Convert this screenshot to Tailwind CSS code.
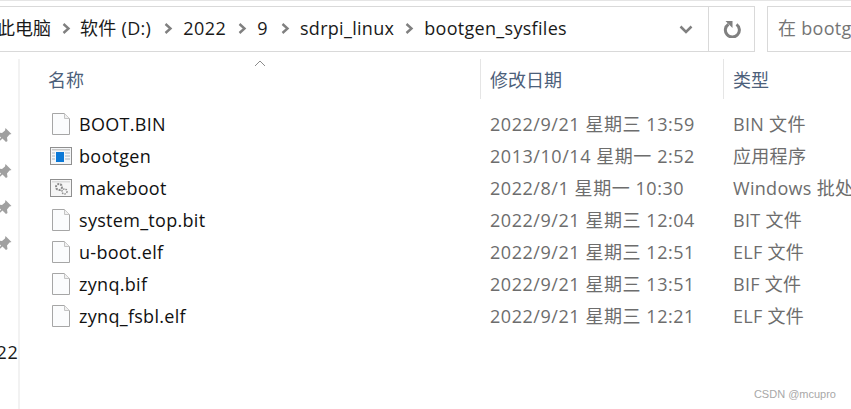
<!DOCTYPE html>
<html><head><meta charset="utf-8"><script src="https://cdn.jsdelivr.net/npm/@tailwindcss/browser@4"></script></head>
<body class="bg-white">
<div class="relative w-[851px] h-[409px] overflow-hidden bg-white text-[18px] font-['Open_Sans','Noto_Sans_CJK_SC',sans-serif]">
  <div class="h-[1px] bg-[#e5e5e5]"></div>
  <div class="flex h-[46px] mt-[5px] text-[#1a1a1a] tracking-[.3px]">
    <div class="flex w-[755px] items-center border border-l-0 border-[#d9d9d9] h-full">
      <div class="flex items-center flex-1 pb-[2px] overflow-hidden whitespace-nowrap">
        <span class="-ml-[3px] tracking-normal">此电脑</span>
        <svg class="w-[9px] h-[11px] ml-[11px] mr-[9px] shrink-0" viewBox="0 0 9 11"><path d="M1.500 1l5 4.500-5 4.500" fill="none" stroke="#808080" stroke-width="2.400"/></svg>
        <span>软件 (D:)</span>
        <svg class="w-[9px] h-[11px] ml-[13px] mr-[10px] shrink-0" viewBox="0 0 9 11"><path d="M1.500 1l5 4.500-5 4.500" fill="none" stroke="#808080" stroke-width="2.400"/></svg>
        <span class="tracking-[.5px]">2022</span>
        <svg class="w-[9px] h-[11px] ml-[12px] mr-[10px] shrink-0" viewBox="0 0 9 11"><path d="M1.500 1l5 4.500-5 4.500" fill="none" stroke="#808080" stroke-width="2.400"/></svg>
        <span>9</span>
        <svg class="w-[9px] h-[11px] ml-[13px] mr-[10px] shrink-0" viewBox="0 0 9 11"><path d="M1.500 1l5 4.500-5 4.500" fill="none" stroke="#808080" stroke-width="2.400"/></svg>
        <span>sdrpi_linux</span>
        <svg class="w-[9px] h-[11px] ml-[11px] mr-[10px] shrink-0" viewBox="0 0 9 11"><path d="M1.500 1l5 4.500-5 4.500" fill="none" stroke="#808080" stroke-width="2.400"/></svg>
        <span>bootgen_sysfiles</span>
      </div>
      <div class="w-[44px] flex justify-center">
        <svg class="w-[14px] h-[9px]" viewBox="0 0 14 9"><path d="M1.500 1.500l5.500 5.500 5.500-5.500" fill="none" stroke="#808080" stroke-width="2.500"/></svg>
      </div>
      <div class="w-[46px] h-full flex items-center justify-center border-l border-[#d9d9d9]">
        <svg class="w-[18px] h-[18px]" viewBox="0 0 18 18"><path d="M5.500 4.200A7 7 0 1 0 13.500 4.400" fill="none" stroke="#808080" stroke-width="3"/><path d="M2.500 1h7v7z" fill="#808080"/></svg>
      </div>
    </div>
    <div class="ml-[12px] flex-1 border border-r-0 border-[#d9d9d9] h-full flex items-center pl-[10px] pb-[2px] text-[#757575] whitespace-nowrap overflow-hidden">在 bootgen_sysfiles 中搜索</div>
  </div>
  <div class="flex h-[357px] pt-[7px]">
    <div class="w-[20px] shrink-0 border-r-2 border-[#f2f2f2] pt-[69px] overflow-hidden">
      <div class="flex flex-col gap-[20px] -ml-[4px]">
        <svg class="w-[16px] h-[16px]" viewBox="0 0 16 16"><path d="M9.500 0l6 6-2 .5-2.500 3 .5 3.500-1.500 1-3.500-3.500L1 15.500l-.5-.5L5 9.500 1.500 6l1-1.500 3.500.5 3-2.500z" fill="#a0a0a0"/></svg>
        <svg class="w-[16px] h-[16px]" viewBox="0 0 16 16"><path d="M9.500 0l6 6-2 .5-2.500 3 .5 3.500-1.500 1-3.500-3.500L1 15.500l-.5-.5L5 9.500 1.500 6l1-1.500 3.500.5 3-2.500z" fill="#a0a0a0"/></svg>
        <svg class="w-[16px] h-[16px]" viewBox="0 0 16 16"><path d="M9.500 0l6 6-2 .5-2.500 3 .5 3.500-1.500 1-3.500-3.500L1 15.500l-.5-.5L5 9.500 1.500 6l1-1.500 3.500.5 3-2.500z" fill="#a0a0a0"/></svg>
        <svg class="w-[16px] h-[16px]" viewBox="0 0 16 16"><path d="M9.500 0l6 6-2 .5-2.500 3 .5 3.500-1.500 1-3.500-3.500L1 15.500l-.5-.5L5 9.500 1.500 6l1-1.500 3.500.5 3-2.500z" fill="#a0a0a0"/></svg>
      </div>
      <div class="mt-[88px] -ml-[25px] text-[#1a1a1a] leading-[24px] tracking-[.5px] text-right w-[43px]">2022</div>
    </div>
    <div class="flex-1 min-w-0 overflow-hidden">
      <div class="relative flex h-[40px] text-[#4c607a] items-center">
        <div class="w-[460px] shrink-0 pl-[28px] pt-[2px]">名称</div>
        <div class="w-[243px] shrink-0 h-full border-l border-[#e5e5e5] pl-[9px] flex items-center pt-[2px]">修改日期</div>
        <div class="flex-1 h-full border-l border-[#e5e5e5] pl-[9px] flex items-center pt-[2px]">类型</div>
        <svg class="absolute left-[234px] top-[1px] w-[12px] h-[7px]" viewBox="0 0 12 7"><path d="M1 6l5-5 5 5" fill="none" stroke="#8c8c8c" stroke-width="1"/></svg>
      </div>
      <div class="mt-[9px] whitespace-nowrap">
        <div class="flex h-[32px] items-center"><div class="w-[470px] shrink-0 flex items-center pl-[32px] text-[#111] tracking-[.3px]"><svg class="w-[18px] h-[22px] mr-[9px]" viewBox="0 0 18 22"><path d="M.5.5h12l5 5v16H.5z" fill="#fbfcfd" stroke="#a6a6a6"/><path d="M12.500.5v5h5" fill="#f0f0f0" stroke="#c4c4c4"/></svg>BOOT.BIN</div><div class="w-[243px] shrink-0 text-[#6d6d6d] tracking-[.55px]">2022/9/21 星期三 13:59</div><div class="shrink-0 text-[#6d6d6d] tracking-[.3px]">BIN 文件</div></div>
        <div class="flex h-[32px] items-center"><div class="w-[470px] shrink-0 flex items-center pl-[30px] text-[#111] tracking-[.3px]"><svg class="w-[22px] h-[18px] mr-[7px]" viewBox="0 0 22 18"><rect x=".5" y=".5" width="21" height="17" fill="#f4f6f8" stroke="#8f8f8f"/><rect x="2" y="2" width="18" height="1.500" fill="#c8c8c8"/><rect x="6" y="5" width="8" height="10" fill="#0a78d7"/><path d="M2 6h3M2 9h3M2 12h3M15 6h5M15 9h5M15 12h5" stroke="#a8b4c0"/></svg>bootgen</div><div class="w-[243px] shrink-0 text-[#6d6d6d] tracking-[.55px]">2013/10/14 星期一 2:52</div><div class="shrink-0 text-[#6d6d6d] tracking-[.3px]">应用程序</div></div>
        <div class="flex h-[32px] items-center"><div class="w-[470px] shrink-0 flex items-center pl-[30px] text-[#111] tracking-[.3px]"><svg class="w-[22px] h-[18px] mr-[7px]" viewBox="0 0 22 18"><rect x=".5" y=".5" width="21" height="17" fill="#f6f6f6" stroke="#8f8f8f"/><rect x="2" y="2" width="18" height="1.500" fill="#dcdcdc"/><circle cx="9" cy="8" r="3" fill="none" stroke="#8c8c8c" stroke-width="2" stroke-dasharray="2 1"/><circle cx="14.500" cy="12.500" r="2.500" fill="none" stroke="#8c8c8c" stroke-width="1.500" stroke-dasharray="1.500 1"/></svg>makeboot</div><div class="w-[243px] shrink-0 text-[#6d6d6d] tracking-[.55px]">2022/8/1 星期一 10:30</div><div class="shrink-0 text-[#6d6d6d] tracking-[.3px]">Windows 批处理文件</div></div>
        <div class="flex h-[32px] items-center"><div class="w-[470px] shrink-0 flex items-center pl-[32px] text-[#111] tracking-[.3px]"><svg class="w-[18px] h-[22px] mr-[9px]" viewBox="0 0 18 22"><path d="M.5.5h12l5 5v16H.5z" fill="#fbfcfd" stroke="#a6a6a6"/><path d="M12.500.5v5h5" fill="#f0f0f0" stroke="#c4c4c4"/></svg>system_top.bit</div><div class="w-[243px] shrink-0 text-[#6d6d6d] tracking-[.55px]">2022/9/21 星期三 12:04</div><div class="shrink-0 text-[#6d6d6d] tracking-[.3px]">BIT 文件</div></div>
        <div class="flex h-[32px] items-center"><div class="w-[470px] shrink-0 flex items-center pl-[32px] text-[#111] tracking-[.3px]"><svg class="w-[18px] h-[22px] mr-[9px]" viewBox="0 0 18 22"><path d="M.5.5h12l5 5v16H.5z" fill="#fbfcfd" stroke="#a6a6a6"/><path d="M12.500.5v5h5" fill="#f0f0f0" stroke="#c4c4c4"/></svg>u-boot.elf</div><div class="w-[243px] shrink-0 text-[#6d6d6d] tracking-[.55px]">2022/9/21 星期三 12:51</div><div class="shrink-0 text-[#6d6d6d] tracking-[.3px]">ELF 文件</div></div>
        <div class="flex h-[32px] items-center"><div class="w-[470px] shrink-0 flex items-center pl-[32px] text-[#111] tracking-[.3px]"><svg class="w-[18px] h-[22px] mr-[9px]" viewBox="0 0 18 22"><path d="M.5.5h12l5 5v16H.5z" fill="#fbfcfd" stroke="#a6a6a6"/><path d="M12.500.5v5h5" fill="#f0f0f0" stroke="#c4c4c4"/></svg>zynq.bif</div><div class="w-[243px] shrink-0 text-[#6d6d6d] tracking-[.55px]">2022/9/21 星期三 13:51</div><div class="shrink-0 text-[#6d6d6d] tracking-[.3px]">BIF 文件</div></div>
        <div class="flex h-[32px] items-center"><div class="w-[470px] shrink-0 flex items-center pl-[32px] text-[#111] tracking-[.3px]"><svg class="w-[18px] h-[22px] mr-[9px]" viewBox="0 0 18 22"><path d="M.5.5h12l5 5v16H.5z" fill="#fbfcfd" stroke="#a6a6a6"/><path d="M12.500.5v5h5" fill="#f0f0f0" stroke="#c4c4c4"/></svg>zynq_fsbl.elf</div><div class="w-[243px] shrink-0 text-[#6d6d6d] tracking-[.55px]">2022/9/21 星期三 12:21</div><div class="shrink-0 text-[#6d6d6d] tracking-[.3px]">ELF 文件</div></div>
      </div>
    </div>
  </div>
  <div class="absolute right-[15px] bottom-[8px] text-[11px] leading-[14px] text-[#a8a8a8] font-['Liberation_Sans',sans-serif]">CSDN @mcupro</div>
</div>
</body></html>
